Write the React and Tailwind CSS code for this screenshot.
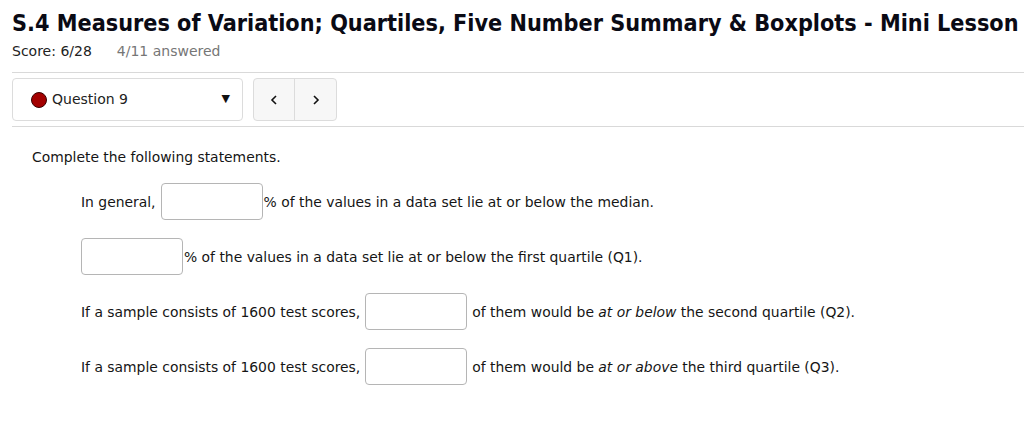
import React from 'react';

const bodyFont = { fontFamily: '"DejaVu Sans", Verdana, sans-serif' };
const titleFont = { fontFamily: '"DejaVu Sans Condensed", "DejaVu Sans", sans-serif' };

const Blank = ({ className = '' }) => (
    <input
        type="text"
        className={`h-[37px] w-[102px] rounded-[4px] border border-[#b5b5b5] bg-white outline-none ${className}`}
    />
);

export default function App() {
    return (
        <div className="min-h-screen bg-white text-[#1a1a1a]" style={bodyFont}>
            {/* Header */}
            <div className="pl-3 pt-[8px]">
                <h1 className="text-[23.2px] font-bold leading-[30px] text-[#0a0a14]" style={titleFont}>
                    S.4 Measures of Variation; Quartiles, Five Number Summary &amp; Boxplots - Mini Lesson
                </h1>
                <div className="mt-[3px] flex gap-[25px] text-[14px] leading-[20px]">
                    <span className="text-[#222]">Score: 6/28</span>
                    <span className="text-[#767676]">4/11 answered</span>
                </div>
            </div>

            {/* Question nav */}
            <div className="ml-3 mt-[11px] border-y border-[#d9d9d9] py-[5px]">
                <div className="flex gap-[10px]">
                    <div className="flex h-[43px] w-[231px] items-center rounded-[4px] border border-[#dcdcdc] pl-[18px] pr-[12px]">
                        <span className="h-[16px] w-[16px] rounded-full border border-[#3a0000] bg-[#a30000]" />
                        <span className="ml-[5px] text-[14px] text-[#222]">Question 9</span>
                        <span className="ml-auto text-[11px] text-[#111]">▼</span>
                    </div>
                    <div className="flex h-[43px] w-[84px] rounded-[4px] border border-[#dcdcdc] bg-[#f7f7f7]">
                        <button className="flex w-[41px] items-center justify-center border-r border-[#dcdcdc]">
                            <svg width="10" height="12" viewBox="0 0 10 12">
                                <path d="M7 2 L3 6 L7 10" fill="none" stroke="#111" strokeWidth="1.6" />
                            </svg>
                        </button>
                        <button className="flex flex-1 items-center justify-center">
                            <svg width="10" height="12" viewBox="0 0 10 12">
                                <path d="M3 2 L7 6 L3 10" fill="none" stroke="#111" strokeWidth="1.6" />
                            </svg>
                        </button>
                    </div>
                </div>
            </div>

            {/* Question body */}
            <div className="pl-8 pt-[20px] text-[13.9px] leading-[20px] text-[#151515]">
                <p>Complete the following statements.</p>

                <div className="ml-[49px] mt-[16px] flex flex-col gap-[18px]">
                    <div className="flex items-center">
                        <span>In general,</span>
                        <Blank className="ml-[5px]" />
                        <span className="ml-[1px]">% of the values in a data set lie at or below the median.</span>
                    </div>
                    <div className="flex items-center">
                        <Blank />
                        <span className="ml-[1px]">% of the values in a data set lie at or below the first quartile (Q1).</span>
                    </div>
                    <div className="flex items-center">
                        <span>If a sample consists of 1600 test scores,</span>
                        <Blank className="ml-[5px]" />
                        <span className="ml-[5px]">
                            of them would be <i>at or below</i> the second quartile (Q2).
                        </span>
                    </div>
                    <div className="flex items-center">
                        <span>If a sample consists of 1600 test scores,</span>
                        <Blank className="ml-[5px]" />
                        <span className="ml-[5px]">
                            of them would be <i>at or above</i> the third quartile (Q3).
                        </span>
                    </div>
                </div>
            </div>
        </div>
    );
}
